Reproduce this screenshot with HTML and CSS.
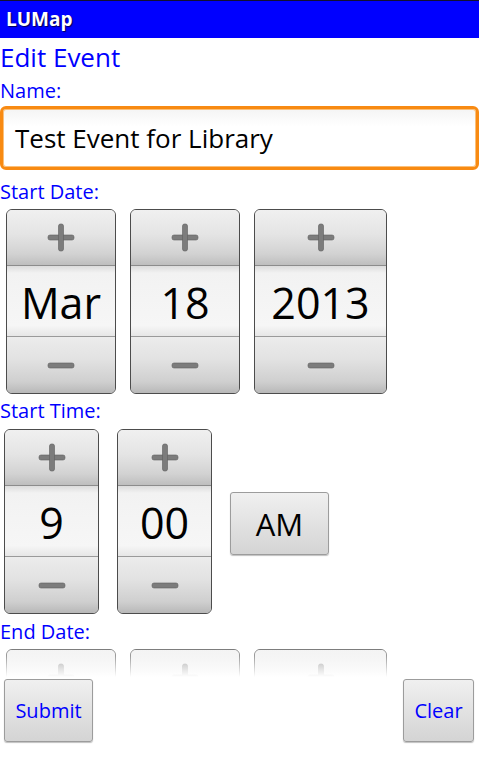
FILE: index.html
```html
<html>
<head>
<title>LUMap</title>
<link rel="stylesheet" href="styles.css">
</head>
<body>
<div class="titlebar">LUMap</div>

<div class="scroll">
  <h1 class="heading">Edit Event</h1>

  <div class="label">Name:</div>
  <div class="field">Test Event for Library</div>

  <div class="label">Start Date:</div>
  <div class="row date-row">
    <div class="picker">
      <div class="step step-up"><svg width="28" height="29" viewBox="0 0 28 29"><rect x="1" y="12" width="26" height="5" rx="2" class="glyph"/><rect x="11.5" y="1" width="5" height="27" rx="2" class="glyph"/></svg></div>
      <div class="value">Mar</div>
      <div class="step step-down"><svg width="28" height="7" viewBox="0 0 28 7"><rect x="1" y="1" width="26" height="5" rx="2" class="glyph"/></svg></div>
    </div>
    <div class="picker">
      <div class="step step-up"><svg width="28" height="29" viewBox="0 0 28 29"><rect x="1" y="12" width="26" height="5" rx="2" class="glyph"/><rect x="11.5" y="1" width="5" height="27" rx="2" class="glyph"/></svg></div>
      <div class="value">18</div>
      <div class="step step-down"><svg width="28" height="7" viewBox="0 0 28 7"><rect x="1" y="1" width="26" height="5" rx="2" class="glyph"/></svg></div>
    </div>
    <div class="picker picker-wide">
      <div class="step step-up"><svg width="28" height="29" viewBox="0 0 28 29"><rect x="1" y="12" width="26" height="5" rx="2" class="glyph"/><rect x="11.5" y="1" width="5" height="27" rx="2" class="glyph"/></svg></div>
      <div class="value">2013</div>
      <div class="step step-down"><svg width="28" height="7" viewBox="0 0 28 7"><rect x="1" y="1" width="26" height="5" rx="2" class="glyph"/></svg></div>
    </div>
  </div>

  <div class="label">Start Time:</div>
  <div class="row time-row">
    <div class="picker picker-narrow">
      <div class="step step-up"><svg width="28" height="29" viewBox="0 0 28 29"><rect x="1" y="12" width="26" height="5" rx="2" class="glyph"/><rect x="11.5" y="1" width="5" height="27" rx="2" class="glyph"/></svg></div>
      <div class="value">9</div>
      <div class="step step-down"><svg width="28" height="7" viewBox="0 0 28 7"><rect x="1" y="1" width="26" height="5" rx="2" class="glyph"/></svg></div>
    </div>
    <div class="picker picker-narrow">
      <div class="step step-up"><svg width="28" height="29" viewBox="0 0 28 29"><rect x="1" y="12" width="26" height="5" rx="2" class="glyph"/><rect x="11.5" y="1" width="5" height="27" rx="2" class="glyph"/></svg></div>
      <div class="value">00</div>
      <div class="step step-down"><svg width="28" height="7" viewBox="0 0 28 7"><rect x="1" y="1" width="26" height="5" rx="2" class="glyph"/></svg></div>
    </div>
    <div class="button ampm">AM</div>
  </div>

  <div class="label">End Date:</div>
  <div class="row date-row">
    <div class="picker">
      <div class="step step-up"><svg width="28" height="29" viewBox="0 0 28 29"><rect x="1" y="12" width="26" height="5" rx="2" class="glyph"/><rect x="11.5" y="1" width="5" height="27" rx="2" class="glyph"/></svg></div>
    </div>
    <div class="picker">
      <div class="step step-up"><svg width="28" height="29" viewBox="0 0 28 29"><rect x="1" y="12" width="26" height="5" rx="2" class="glyph"/><rect x="11.5" y="1" width="5" height="27" rx="2" class="glyph"/></svg></div>
    </div>
    <div class="picker picker-wide">
      <div class="step step-up"><svg width="28" height="29" viewBox="0 0 28 29"><rect x="1" y="12" width="26" height="5" rx="2" class="glyph"/><rect x="11.5" y="1" width="5" height="27" rx="2" class="glyph"/></svg></div>
    </div>
  </div>
</div>

<div class="bottombar">
  <div class="button action submit">Submit</div>
  <div class="button action clear">Clear</div>
</div>
</body>
</html>
```
FILE: styles.css
```css
body { margin:0; background:#FFF; font-family:"Open Sans", "Noto Sans", "DejaVu Sans", sans-serif; width:479px; height:763px; overflow:hidden; }

.titlebar { height:37px; line-height:37px; border-top:1px solid #101030; background:#0000FF; color:#FFF; font-weight:bold; font-size:19px; padding-left:6px; text-shadow:1px 1px 1px #000055; }

.scroll { height:639px; overflow:hidden; position:relative; }
.scroll:after { content:""; position:absolute; left:0; right:0; bottom:0; height:38px; background:linear-gradient(rgba(255,255,255,0), #FFF); }

.heading { margin:0; height:40px; line-height:36px; padding-top:1px; box-sizing:border-box; font-size:26px; font-weight:normal; color:#0000FF; }
.label { height:26px; line-height:26px; font-size:20px; color:#0000FF; margin-top:4px; }
.heading + .label { margin-top:0; }

.field { margin-top:2px; height:64px; box-sizing:border-box; border:3px solid #F88A12; border-radius:6px; background:linear-gradient(#F4F4F4, #FFF 30%, #FFF); padding-left:12px; font-size:26px; display:flex; align-items:center; color:#000; box-shadow:inset 0 0 0 1px #FBC07A; }
.field + .label { margin-top:9px; }

.row { display:flex; align-items:center; margin-top:4px; }
.date-row { padding-left:6px; gap:14px; align-items:flex-start; }
.time-row { padding-left:4px; gap:18px; margin-top:5px; }
.time-row + .label { margin-top:5px; }

.picker { width:110px; height:185px; box-sizing:border-box; border:1px solid #4C4C4C; border-radius:6px; overflow:hidden; display:flex; flex-direction:column; background:#DDD; }
.picker-wide { width:133px; }
.picker-narrow { width:95px; }

.step { height:55px; flex:none; display:flex; align-items:center; justify-content:center; }
.step-up { background:linear-gradient(#F0F0F0, #E4E4E4 45%, #D2D2D2 80%, #BEBEBE); border-bottom:1px solid #8C8C8C; }
.step-down { background:linear-gradient(#ECECEC, #E2E2E2 40%, #CFCFCF 80%, #B8B8B8); border-top:1px solid #9A9A9A; padding-top:1px; }
.glyph { fill:#7C7C7C; stroke:#5E5E5E; stroke-width:0.6; }

.value { flex:1; display:flex; align-items:center; justify-content:center; font-size:43px; color:#000; background:linear-gradient(#DCDCDC, #F2F2F2 10%, #F6F6F6 85%, #E6E6E6); padding-top:2px; box-sizing:border-box; }

.button { box-sizing:border-box; border:1px solid #9C9C9C; border-radius:3px; background:linear-gradient(#F0F0F0, #E2E2E2 50%, #D4D4D4); box-shadow:0 1px 1px rgba(0,0,0,0.25); display:flex; align-items:center; justify-content:center; }
.ampm { width:99px; height:63px; font-size:31px; color:#000; margin-top:4px; }

.bottombar { height:86px; display:flex; justify-content:space-between; align-items:flex-start; padding:2px 5px 0 4px; box-sizing:border-box; }
.action { height:63px; font-size:20px; color:#0000FF; }
.submit { width:89px; }
.clear { width:71px; }
```
